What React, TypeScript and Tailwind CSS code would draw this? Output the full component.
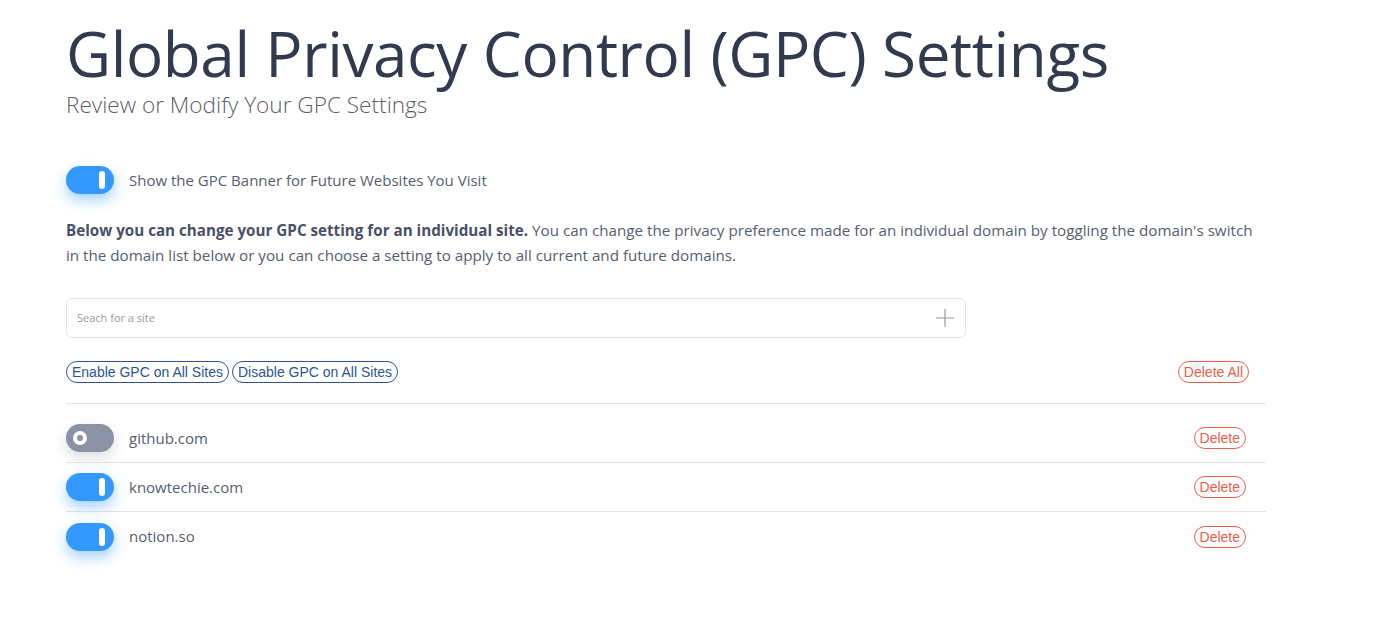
import React from "react";

const Toggle = ({ on }: { on: boolean }) =>
  on ? (
    <div className="relative w-[48px] h-[28px] rounded-full bg-[#3399ff] shadow-[0_6px_14px_rgba(51,153,255,0.45)] shrink-0">
      <div className="absolute right-[9px] top-[5px] w-[6px] h-[18px] rounded-full bg-white" />
    </div>
  ) : (
    <div className="relative w-[48px] h-[28px] rounded-full bg-[#8b92a5] shadow-[0_6px_14px_rgba(120,130,150,0.25)] shrink-0">
      <div className="absolute left-[7px] top-[7px] w-[14px] h-[14px] rounded-full bg-white flex items-center justify-center">
        <div className="w-[6px] h-[6px] rounded-full bg-[#8b92a5]" />
      </div>
    </div>
  );

const domains = [
  { name: "github.com", on: false },
  { name: "knowtechie.com", on: true },
  { name: "notion.so", on: true },
];

export default function App() {
  return (
    <div className="min-h-[635px] bg-white text-[#575e6e]" style={{ fontFamily: '"Open Sans", "Noto Sans", sans-serif' }}>
      <div className="ml-[66px] w-[1200px] pt-[17px]">
        <h1 className="text-[62px] leading-[72px] text-[#333a4d] font-normal tracking-[-0.4px]">
          Global Privacy Control (GPC) Settings
        </h1>
        <div className="text-[22.6px] leading-[28px] font-light text-[#5e5e66] mt-[2px]">
          Review or Modify Your GPC Settings
        </div>

        <div className="flex items-center gap-[15px] mt-[47px]">
          <Toggle on={true} />
          <span className="text-[15px]">Show the GPC Banner for Future Websites You Visit</span>
        </div>

        <p className="mt-[24px] text-[15.2px] leading-[25px]">
          <b className="font-bold text-[#4a5164]">Below you can change your GPC setting for an individual site.</b>{" "}
          You can change the privacy preference made for an individual domain by toggling the domain's switch in the domain list below or you can choose a setting to apply to all current and future domains.
        </p>

        <div className="mt-[30px] w-[900px] h-[40px] border border-[#e5e5e5] rounded-[6px] flex items-center justify-between pl-[10px] pr-[10px]">
          <span className="text-[11px] text-[#999]">Seach for a site</span>
          <svg width="20" height="20" viewBox="0 0 20 20">
            <path d="M10 1v18M1 10h18" stroke="#999" strokeWidth="1.2" fill="none" />
          </svg>
        </div>

        <div className="mt-[23px] flex items-center justify-between pr-[17px]" style={{ fontFamily: '"Liberation Sans", Arial, sans-serif' }}>
          <div className="flex gap-[3px]">
            <button className="border border-[#2d5592] text-[#2d5592] rounded-full px-[5px] h-[22px] text-[14px] leading-[20px]">
              Enable GPC on All Sites
            </button>
            <button className="border border-[#2d5592] text-[#2d5592] rounded-full px-[5px] h-[22px] text-[14px] leading-[20px]">
              Disable GPC on All Sites
            </button>
          </div>
          <button className="border border-[#e8604c] text-[#e8604c] rounded-full px-[5px] h-[22px] text-[14px] leading-[20px]">
            Delete All
          </button>
        </div>

        <div className="mt-[20px] border-t border-[#e5e5e5] pt-[10px]">
          {domains.map((d, i) => (
            <div
              key={d.name}
              className={`flex items-center justify-between h-[49px] ${i < domains.length - 1 ? "border-b border-[#e5e5e5]" : ""}`}
            >
              <div className="flex items-center gap-[15px]">
                <Toggle on={d.on} />
                <span className="text-[15px]">{d.name}</span>
              </div>
              <button
                className="mr-[20px] border border-[#e8604c] text-[#e8604c] rounded-full px-[5px] h-[22px] text-[14px] leading-[20px]"
                style={{ fontFamily: '"Liberation Sans", Arial, sans-serif' }}
              >
                Delete
              </button>
            </div>
          ))}
        </div>
      </div>
    </div>
  );
}
